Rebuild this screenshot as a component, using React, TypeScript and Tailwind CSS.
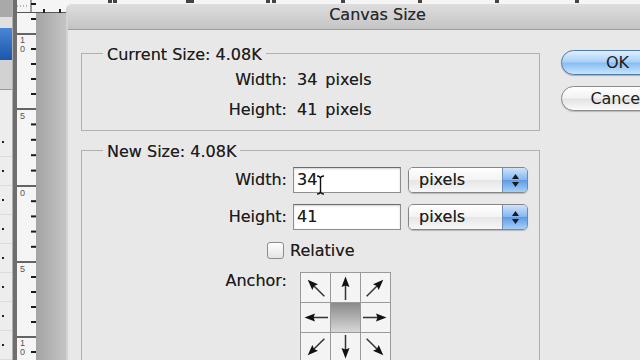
import type { ReactNode } from "react";

const MAJORS = [34, 109, 186, 262, 337];
const PANEL_DOTS = [0, 1, 2, 3, 4, 5, 6, 7];
// degrees for each anchor cell, null = the selected centre cell
const ANCHORS: (number | null)[] = [315, 0, 45, 270, null, 90, 225, 180, 135];

function SidePanel() {
  return (
    <div className="flex w-[12px] flex-col bg-[#ededed]">
      <div className="h-[17px] bg-[#a9a9a9]" />
      <div className="h-[11px] bg-[#e0e0e0]" />
      <div className="h-[32px] bg-linear-to-b from-[#4a86d6] to-[#1c55aa]" />
      <div className="h-[30px] border-b border-[#9a9a9a] bg-[#d2d2d2]" />
      <div className="h-[38px]" />
      {PANEL_DOTS.map((i) => (
        <div key={i} className="flex h-[29px] items-center border-b border-[#dcdcdc] pl-[2px]">
          <span className="h-[2px] w-[2px] bg-[#222]" />
        </div>
      ))}
    </div>
  );
}

function VerticalRuler() {
  const ticks: number[] = [MAJORS[0] - 30, MAJORS[0] - 15];
  for (let i = 0; i < MAJORS.length - 1; i++) {
    const a = MAJORS[i];
    const b = MAJORS[i + 1];
    for (let k = 1; k < 5; k++) ticks.push(a + ((b - a) * k) / 5);
  }
  ticks.push(352);
  return (
    <div className="w-[19px] bg-[#f5f5f5]">
      <svg width="19" height="360" className="block">
        <line x1="14" y1="0" x2="14" y2="13" stroke="#444" strokeWidth="1" />
        <line x1="0" y1="6" x2="12" y2="6" stroke="#777" strokeWidth="1" strokeDasharray="1 2" />
        <line x1="0" y1="12.5" x2="19" y2="12.5" stroke="#555" strokeWidth="1" />
        {MAJORS.map((y) => (
          <line key={y} x1="0" y1={y} x2="19" y2={y} stroke="#333" strokeWidth="1.5" />
        ))}
        {ticks.map((y) => (
          <line key={y} x1="14" y1={y} x2="19" y2={y} stroke="#1a1a1a" strokeWidth="2" />
        ))}
        <g fontFamily="Liberation Sans, sans-serif" fontSize="9" fill="#555">
          <text x="3" y="43">1</text>
          <text x="3" y="52">0</text>
          <text x="3" y="119">5</text>
          <text x="3" y="196">0</text>
          <text x="3" y="272">5</text>
          <text x="3" y="346">1</text>
          <text x="3" y="355">0</text>
        </g>
      </svg>
    </div>
  );
}

function TopRuler() {
  const tops = [108, 113, 186, 190, 266, 272, 341, 418, 495, 575];
  return (
    <div className="h-[13px] bg-[#f5f5f5]">
      <svg width="604" height="13" className="block">
        <line x1="0" y1="12.5" x2="32" y2="12.5" stroke="#555" strokeWidth="1" />
        <line x1="8" y1="9" x2="8" y2="13" stroke="#222" strokeWidth="2" />
        <line x1="24" y1="9" x2="24" y2="13" stroke="#222" strokeWidth="2" />
        {tops.map((x) => (
          <rect key={x} x={x - 36} y="0" width="4" height="3" fill="#444" />
        ))}
      </svg>
    </div>
  );
}

function Group({ title, className, children }: { title: string; className: string; children: ReactNode }) {
  return (
    <div className={`relative border border-[#b0b0b0] ${className}`}>
      <span className="absolute -top-[9px] left-[21px] bg-[#e8e8e8] px-[4px] leading-[19px]">{title}</span>
      {children}
    </div>
  );
}

function IBeam() {
  return (
    <svg width="9" height="20" className="absolute left-[22px] top-[7px]">
      <path
        d="M1 1 Q4.5 1 4.5 4 Q4.5 1 8 1 M4.5 4 V16 M1 19 Q4.5 19 4.5 16 Q4.5 19 8 19"
        stroke="#111"
        strokeWidth="1.4"
        fill="none"
      />
    </svg>
  );
}

function TextField({ value, cursor }: { value: string; cursor?: boolean }) {
  return (
    <div className="relative ml-[6px] flex h-[26px] w-[108px] items-center border border-[#8e8e8e] border-t-[#6c6c6c] bg-white pl-[3px] shadow-[inset_0_1px_2px_rgba(0,0,0,0.18)]">
      <span>{value}</span>
      {cursor && <IBeam />}
    </div>
  );
}

function UnitSelect() {
  return (
    <div className="ml-[7px] flex h-[26px] w-[120px] overflow-hidden rounded-[5px] border border-[#858585] shadow-[0_1px_1px_rgba(0,0,0,0.2)]">
      <div className="flex flex-1 items-center bg-[linear-gradient(to_bottom,#ffffff_0%,#f3f3f3_50%,#e6e6e6_52%,#f7f7f7_100%)] pl-[10px]">
        pixels
      </div>
      <div className="flex w-[25px] flex-col items-center justify-center gap-[3px] border-l border-[#6d8fbd] bg-[linear-gradient(to_bottom,#cfe3fb_0%,#86b8f0_48%,#5f9ce6_52%,#a6cff8_100%)]">
        <svg width="7" height="5">
          <path d="M3.5 0 L7 5 L0 5 Z" fill="#1a1a1a" />
        </svg>
        <svg width="7" height="5">
          <path d="M0 0 L7 0 L3.5 5 Z" fill="#1a1a1a" />
        </svg>
      </div>
    </div>
  );
}

function Arrow({ deg }: { deg: number }) {
  return (
    <svg width="29" height="29" viewBox="0 0 29 29">
      <g transform={`rotate(${deg} 14.5 14.5)`}>
        <line x1="14.5" y1="12" x2="14.5" y2="27" stroke="#333" strokeWidth="1.5" />
        <path d="M14.5 3.5 L18.5 14 L14.5 12.5 L10.5 14 Z" fill="#111" />
      </g>
    </svg>
  );
}

function AnchorGrid() {
  return (
    <div className="grid grid-cols-[repeat(3,29px)] grid-rows-[repeat(3,29px)] gap-px border border-[#9a9a9a] bg-[#9a9a9a]">
      {ANCHORS.map((deg, i) =>
        deg === null ? (
          <div key={i} className="bg-linear-to-b from-[#8a8a8a] to-[#d8d8d8]" />
        ) : (
          <div key={i} className="flex items-center justify-center bg-[#f4f4f4]">
            <Arrow deg={deg} />
          </div>
        ),
      )}
    </div>
  );
}

function CanvasSizeDialog() {
  return (
    <div className="absolute left-[66px] top-[4px] h-[380px] w-[621px] overflow-hidden rounded-tl-[6px] border-l-2 border-[#d3d3d3] bg-[#e8e8e8] [text-shadow:0_0_0.6px_rgba(0,0,0,0.55)]">
      <div className="h-[26px] border-b border-[#9d9d9d] bg-linear-to-b from-[#dedede] to-[#c4c4c4] text-center leading-[22px] text-[#2a2a2a]">
        Canvas Size
      </div>
      <div className="flex items-start pl-[13px]">
        <div className="flex w-[459px] flex-col">
          <Group title="Current Size: 4.08K" className="mt-[23px] pb-[5px] pt-[11px]">
            <div className="flex h-[30px] items-center">
              <span className="w-[205px] text-right">Width:</span>
              <span className="ml-[10px]">34</span>
              <span className="ml-[8px]">pixels</span>
            </div>
            <div className="flex h-[30px] items-center">
              <span className="w-[205px] text-right">Height:</span>
              <span className="ml-[10px]">41</span>
              <span className="ml-[8px]">pixels</span>
            </div>
          </Group>
          <Group title="New Size: 4.08K" className="mt-[19px] pb-[40px] pt-[16px]">
            <div className="flex h-[26px] items-center">
              <span className="w-[205px] text-right">Width:</span>
              <TextField value="34" cursor />
              <UnitSelect />
            </div>
            <div className="mt-[11px] flex h-[26px] items-center">
              <span className="w-[205px] text-right">Height:</span>
              <TextField value="41" />
              <UnitSelect />
            </div>
            <div className="mt-[12px] flex h-[17px] items-center pl-[185px]">
              <span className="h-[17px] w-[17px] rounded-[3px] border border-[#8d8d8d] bg-linear-to-b from-white to-[#e4e4e4]" />
              <span className="ml-[6px]">Relative</span>
            </div>
            <div className="mt-[13px] flex items-start">
              <span className="w-[205px] text-right leading-[17px]">Anchor:</span>
              <div className="ml-[13px]">
                <AnchorGrid />
              </div>
            </div>
          </Group>
        </div>
        <div className="ml-[21px] mt-[20px] flex flex-col gap-[11px]">
          <button className="h-[25px] w-[113px] rounded-full border border-[#4f7bab] bg-[linear-gradient(to_bottom,#e0effd_0%,#a9d0f8_48%,#86bdf3_52%,#c9e5fd_100%)] leading-[23px] shadow-[0_1px_1px_rgba(0,0,0,0.25)]">
            OK
          </button>
          <button className="h-[25px] w-[113px] rounded-full border border-[#8a8a8a] bg-[linear-gradient(to_bottom,#ffffff_0%,#f2f2f2_48%,#e2e2e2_52%,#fbfbfb_100%)] leading-[23px] shadow-[0_1px_1px_rgba(0,0,0,0.2)]">
            Cancel
          </button>
        </div>
      </div>
    </div>
  );
}

export default function App() {
  return (
    <div className="relative h-[360px] w-[640px] overflow-hidden bg-[#e8e8e8] font-['DejaVu_Sans','Liberation_Sans',sans-serif] text-[16px] text-[#1d1d1d]">
      <div className="flex h-full">
        <SidePanel />
        <div className="w-[5px] border-l border-[#b0b0b0] bg-[#6e6e6e]" />
        <VerticalRuler />
        <div className="flex flex-1 flex-col">
          <TopRuler />
          <div className="flex flex-1">
            <div className="w-[30px] bg-linear-to-r from-[#a4a4a4] to-[#c4c4c4]" />
            <div className="flex-1 bg-[#c8c8c8]" />
          </div>
        </div>
      </div>
      <CanvasSizeDialog />
    </div>
  );
}
